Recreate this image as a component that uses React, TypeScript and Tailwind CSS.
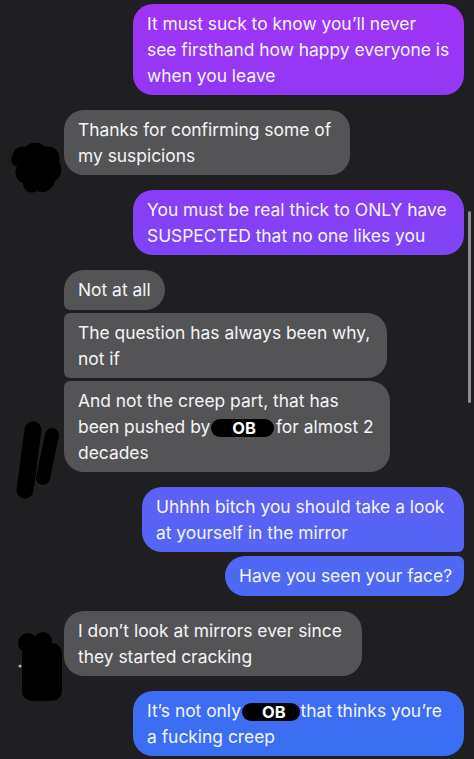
import React from "react";

type Side = "in" | "out";

function Bubble({
  side,
  className,
  children,
}: {
  side: Side;
  className: string;
  children: React.ReactNode;
}) {
  return (
    <div
      className={
        (side === "out" ? "self-end " : "self-start ") +
        "px-[14px] text-[17.4px] leading-[26px] text-[#f4f4f6] whitespace-nowrap " +
        className
      }
    >
      {children}
    </div>
  );
}

function Redact({ pad }: { pad: string }) {
  return (
    <span
      className={
        "inline-block bg-black rounded-full text-white font-bold text-[16.5px] leading-[18px] align-[-1px] " +
        pad
      }
      style={{ fontFamily: "Inter, 'Liberation Sans', sans-serif" }}
    >
      OB
    </span>
  );
}

export default function App() {
  return (
    <div
      className="relative w-[474px] h-[759px] overflow-hidden bg-[#1f1f21]"
      style={{ fontFamily: "Inter, 'Open Sans', 'Liberation Sans', sans-serif" }}
    >
      <div className="flex flex-col pt-[4px] pr-[10px] pl-[64px]">
        <Bubble
          side="out"
          className="py-[6.5px] w-[331px] rounded-[20px] bg-linear-to-b from-[#a033f6] to-[#9238f5]"
        >
          It must suck to know you’ll never
          <br />
          see firsthand how happy everyone is
          <br />
          when you leave
        </Bubble>

        <div className="relative self-start mt-[15px]">
          <Bubble side="in" className="py-[6.5px] w-[286px] rounded-[20px] bg-[#545457]">
            Thanks for confirming some of
            <br />
            my suspicions
          </Bubble>
          <svg
            className="absolute left-[-57px] bottom-[-20px]"
            width="56"
            height="56"
            viewBox="0 0 56 56"
          >
            <path
              fill="#000"
              d="M6 16 C6 9 14 6 19 8 C22 3 34 2 38 8 C46 6 54 12 52 22 C56 28 55 38 48 42 C46 50 38 56 30 52 C24 56 16 52 16 44 C10 42 6 34 10 28 C4 26 3 20 6 16 Z"
            />
          </svg>
        </div>

        <Bubble
          side="out"
          className="py-[6.5px] mt-[15px] w-[331px] rounded-[20px] bg-linear-to-b from-[#8a3cf6] to-[#7d45f5]"
        >
          You must be real thick to ONLY have
          <br />
          SUSPECTED that no one likes you
        </Bubble>

        <Bubble
          side="in"
          className="py-[7px] mt-[15px] w-[101px] rounded-[20px] rounded-bl-[6px] bg-[#545457]"
        >
          Not at all
        </Bubble>
        <Bubble
          side="in"
          className="py-[6.5px] mt-[3px] w-[323px] rounded-[20px] rounded-l-[6px] bg-[#545457]"
        >
          The question has always been why,
          <br />
          not if
        </Bubble>
        <div className="relative self-start mt-[3px]">
          <Bubble
            side="in"
            className="py-[6.5px] w-[326px] rounded-[20px] rounded-tl-[6px] bg-[#545457]"
          >
            And not the creep part, that has
            <br />
            been pushed by<Redact pad="pl-[21px] pr-[18px] mr-[2px] ml-[1px]" />for almost 2
            <br />
            decades
          </Bubble>
          <svg
            className="absolute left-[-49px] bottom-[-27px]"
            width="45"
            height="78"
            viewBox="0 0 45 78"
          >
            <g stroke="#000" strokeLinecap="round" fill="none">
              <line x1="18" y1="9" x2="10" y2="69" strokeWidth="17" />
              <line x1="37" y1="14" x2="28" y2="57" strokeWidth="14" />
            </g>
          </svg>
        </div>

        <Bubble
          side="out"
          className="py-[6.5px] mt-[15px] w-[322px] rounded-[20px] rounded-br-[6px] bg-linear-to-b from-[#5d60f5] to-[#5466f5]"
        >
          Uhhhh bitch you should take a look
          <br />
          at yourself in the mirror
        </Bubble>
        <Bubble
          side="out"
          className="py-[7px] mt-[4px] w-[239px] rounded-[20px] rounded-tr-[6px] bg-linear-to-b from-[#5067f5] to-[#4b69f5]"
        >
          Have you seen your face?
        </Bubble>

        <div className="relative self-start mt-[15px]">
          <Bubble side="in" className="py-[6.5px] w-[298px] rounded-[20px] bg-[#545457]">
            I don’t look at mirrors ever since
            <br />
            they started cracking
          </Bubble>
          <svg
            className="absolute left-[-52px] bottom-[-29px]"
            width="52"
            height="76"
            viewBox="0 0 52 76"
          >
            <g fill="#000">
              <circle cx="16" cy="14" r="10" />
              <circle cx="31" cy="12" r="9" />
              <circle cx="38" cy="30" r="12" />
              <rect x="10" y="14" width="40" height="58" rx="10" />
              <circle cx="42" cy="60" r="8" />
            </g>
            <circle cx="8" cy="37" r="1.6" fill="#b9a99a" />
          </svg>
        </div>

        <Bubble
          side="out"
          className="py-[6.5px] mt-[15px] w-[331px] rounded-[20px] bg-linear-to-b from-[#3f6cf4] to-[#3a6ff3]"
        >
          It’s not only<Redact pad="pl-[20px] pr-[14px] mx-[1px]" />that thinks you’re
          <br />a fucking creep
        </Bubble>
      </div>

      <div className="absolute left-[468px] top-[211px] w-[3px] h-[192px] rounded-full bg-[#8e8e92]" />
    </div>
  );
}
